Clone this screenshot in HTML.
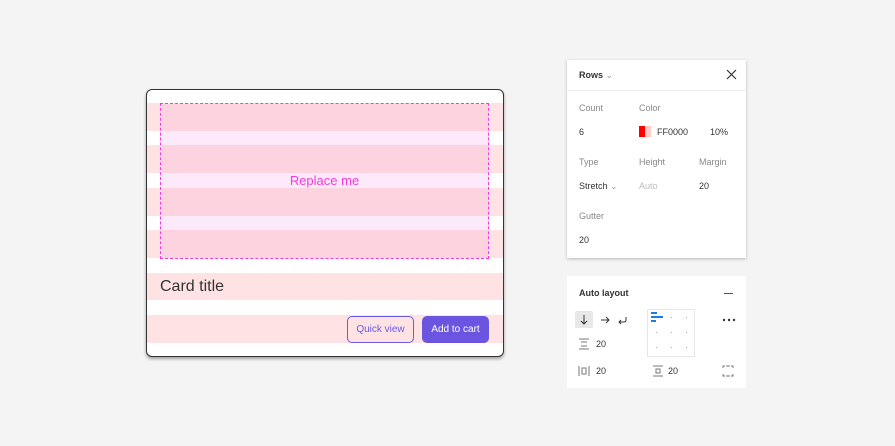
<html><head><style>
body{margin:0;width:895px;height:446px;background:#f4f4f4;font-family:"Liberation Sans",sans-serif;position:relative;overflow:hidden}
.a{position:absolute}
.card{left:146px;top:89px;width:356px;height:266px;background:#fff;border:1px solid #333;border-radius:6px;box-shadow:0 2px 3px rgba(0,0,0,.35);overflow:hidden}
.band{position:absolute;left:0;width:356px;background:#fee2e4}
.t{font-size:9px;color:#333}
.l{font-size:9px;color:#888}
.d{position:absolute;width:1px;height:1px;background:#aaa}
</style></head><body>
<div class="a card">
<div class="band" style="top:13px;height:28px"></div>
<div class="band" style="top:55px;height:28px"></div>
<div class="band" style="top:98px;height:28px"></div>
<div class="band" style="top:140px;height:28px"></div>
<div class="band" style="top:183px;height:27px"></div>
<div class="band" style="top:225px;height:28px"></div>
<div class="a" style="left:13px;top:13px;width:329px;height:156px;background:#fce9f9;border:1px dashed #f53bdc;box-sizing:border-box"></div>
<div class="a" style="left:14px;top:14px;width:327px;height:27px;background:#fdd3df"></div>
<div class="a" style="left:14px;top:55px;width:327px;height:28px;background:#fdd3df"></div>
<div class="a" style="left:14px;top:98px;width:327px;height:28px;background:#fdd3df"></div>
<div class="a" style="left:14px;top:140px;width:327px;height:28px;background:#fdd3df"></div>
<div class="a" style="left:14px;top:83px;width:327px;text-align:center;color:#f53bdc;font-size:13px">Replace me</div>
<div class="a" style="left:13px;top:188px;font-size:16px;color:#333">Card title</div>
<div class="a" style="left:200px;top:226px;width:65px;height:25px;border:1px solid #6b5ce0;border-radius:5px;color:#6b5ce0;font-size:10px;text-align:center;line-height:25px;background:#fee2e4">Quick view</div>
<div class="a" style="left:275px;top:226px;width:67px;height:27px;background:#6b55e0;border-radius:5px;color:#fff;font-size:10px;text-align:center;line-height:27px">Add to cart</div>
</div>

<div class="a" style="left:567px;top:60px;width:179px;height:198px;background:#fff;box-shadow:0 1px 3px rgba(0,0,0,.25)">
<div class="a" style="left:0;top:30px;width:179px;height:1px;background:#eee"></div>
<div class="a t" style="left:12px;top:10px;font-weight:bold">Rows <span style="color:#999;font-weight:normal">⌄</span></div>
<svg class="a" style="left:159px;top:9px" width="11" height="11"><path d="M1 1L10 10M10 1L1 10" stroke="#333" stroke-width="1.2"/></svg>
<div class="a l" style="left:12px;top:43px">Count</div><div class="a l" style="left:72px;top:43px">Color</div>
<div class="a t" style="left:12px;top:67px">6</div>
<div class="a" style="left:72px;top:66px;width:6px;height:11px;background:#f00"></div><div class="a" style="left:78px;top:66px;width:6px;height:11px;background:#fcc"></div>
<div class="a t" style="left:90px;top:67px">FF0000</div><div class="a t" style="left:143px;top:67px">10%</div>
<div class="a l" style="left:12px;top:97px">Type</div><div class="a l" style="left:72px;top:97px">Height</div><div class="a l" style="left:132px;top:97px">Margin</div>
<div class="a t" style="left:12px;top:121px">Stretch <span style="color:#999">⌄</span></div><div class="a" style="left:72px;top:121px;font-size:9px;color:#bbb">Auto</div><div class="a t" style="left:132px;top:121px">20</div>
<div class="a l" style="left:12px;top:151px">Gutter</div>
<div class="a t" style="left:12px;top:175px">20</div>
</div>

<div class="a" style="left:567px;top:276px;width:179px;height:112px;background:#fff">
<div class="a t" style="left:12px;top:12px;font-weight:bold">Auto layout</div>
<div class="a" style="left:157px;top:17px;width:9px;height:1px;background:#555"></div>
<div class="a" style="left:8px;top:35px;width:18px;height:17px;background:#e8e8e8;border-radius:2px"></div>
<svg class="a" style="left:8px;top:35px" width="60" height="17"><path d="M9 4V13M6 10L9 13L12 10" stroke="#333" fill="none"/><path d="M26 9H34M31 6L34 9L31 12" stroke="#333" fill="none"/><path d="M51 6V9Q51 11 49 11H44M46 9L44 11L46 13" stroke="#333" fill="none"/></svg>
<div class="a" style="left:80px;top:33px;width:46px;height:46px;border:1px solid #e6e6e6"></div>
<div class="a" style="left:84px;top:36px;width:6px;height:2px;background:#1a7ce6"></div>
<div class="a" style="left:84px;top:40px;width:12px;height:2px;background:#1a7ce6"></div>
<div class="a" style="left:84px;top:44px;width:5px;height:2px;background:#1a7ce6"></div>
<div class="d" style="left:104px;top:41px"></div><div class="d" style="left:119px;top:41px"></div>
<div class="d" style="left:89px;top:56px"></div><div class="d" style="left:104px;top:56px"></div><div class="d" style="left:119px;top:56px"></div>
<div class="d" style="left:89px;top:71px"></div><div class="d" style="left:104px;top:71px"></div><div class="d" style="left:119px;top:71px"></div>
<svg class="a" style="left:155px;top:42px" width="14" height="4"><circle cx="2" cy="2" r="1.2" fill="#333"/><circle cx="7" cy="2" r="1.2" fill="#333"/><circle cx="12" cy="2" r="1.2" fill="#333"/></svg>
<svg class="a" style="left:11px;top:62px" width="12" height="12"><path d="M1 1H11M1 11H11M3 4H9M3 8H9" stroke="#777" fill="none"/></svg>
<div class="a t" style="left:29px;top:63px">20</div>
<svg class="a" style="left:11px;top:89px" width="12" height="12"><path d="M1 1V11M11 1V11M4 3H8V9H4Z" stroke="#777" fill="none"/></svg>
<div class="a t" style="left:29px;top:90px">20</div>
<svg class="a" style="left:85px;top:89px" width="12" height="12"><path d="M1 1H11M1 11H11M4 4H8V8H4Z" stroke="#777" fill="none"/></svg>
<div class="a t" style="left:101px;top:90px">20</div>
<svg class="a" style="left:155px;top:89px" width="12" height="12"><path d="M3 1H1V3M9 1H11V3M1 9V11H3M11 9V11H9M4 1H8M4 11H8" stroke="#777" fill="none"/></svg>
</div>
</body></html>
